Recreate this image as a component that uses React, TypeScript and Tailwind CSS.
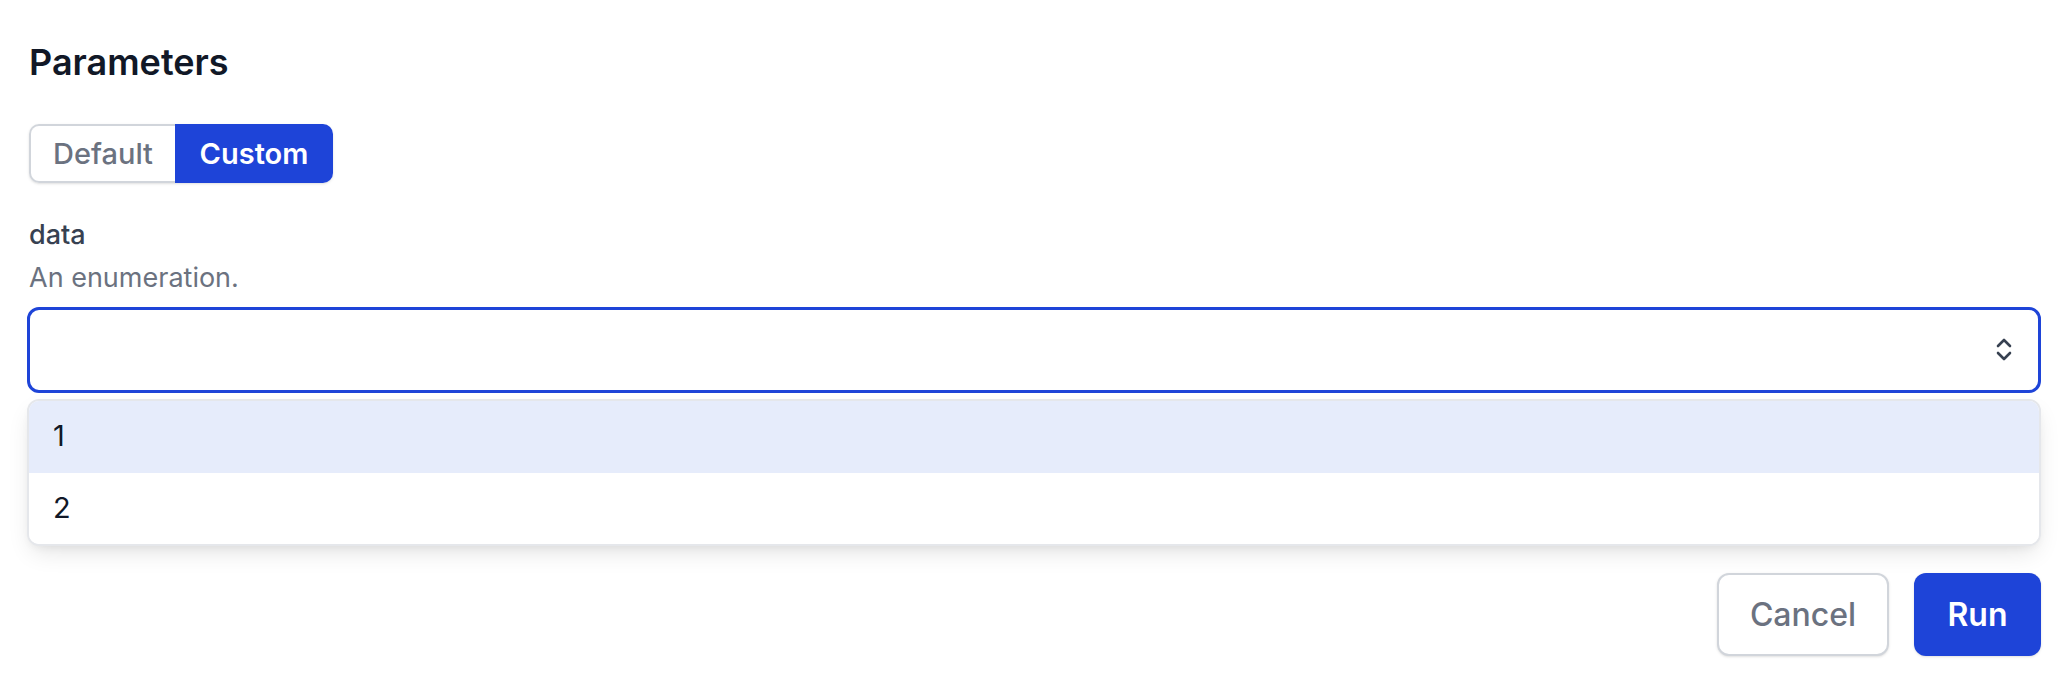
import React from "react";

export default function App() {
  return (
    <div className="w-[2072px] h-[678px] bg-white pl-[27px] pr-[31px] pt-[38px] font-['Inter',sans-serif]">
      <h2 className="text-[36px] leading-[48px] font-semibold text-[#111827] pl-[2px]">Parameters</h2>
      <div className="mt-[38px] flex h-[59px] w-fit ml-[2px] rounded-[10px] shadow-sm">
        <button className="w-[146px] h-full rounded-l-[10px] border-2 border-r-0 border-[#d1d5db] bg-white text-[29px] font-medium text-[#6b7280]">Default</button>
        <button className="w-[158px] h-full rounded-r-[10px] bg-[#1e44d8] text-[29px] font-semibold text-white">Custom</button>
      </div>
      <div className="mt-[32px] pl-[2px] text-[27px] leading-[40px] font-medium text-[#374151]">data</div>
      <div className="mt-[3px] pl-[2px] text-[27px] leading-[40px] text-[#6b7280]">An enumeration.</div>
      <div className="mt-[9px] relative">
        <div className="h-[86px] w-full rounded-[12px] border-[3px] border-[#1e44d8] bg-white flex items-center justify-end pr-[26px]">
          <svg width="16" height="26" viewBox="0 0 16 26" fill="none" stroke="#374151" strokeWidth="2.6" strokeLinecap="round" strokeLinejoin="round">
            <path d="M2 9 L8 3 L14 9" />
            <path d="M2 16 L8 22 L14 16" />
          </svg>
        </div>
        <div className="mt-[6px] w-full rounded-[12px] border-2 border-[#e5e7eb] bg-white shadow-[0_10px_25px_-5px_rgba(0,0,0,0.12),0_4px_10px_-4px_rgba(0,0,0,0.08)] overflow-hidden">
          <div className="h-[72px] bg-[#e6ecfb] flex items-center pl-[24px] pb-[2px] text-[29px] text-[#111827]">1</div>
          <div className="h-[71px] bg-white flex items-center pl-[24px] pb-[2px] text-[29px] text-[#111827]">2</div>
        </div>
      </div>
      <div className="mt-[27px] flex justify-end gap-[25px]">
        <button className="w-[172px] h-[83px] rounded-[12px] border-2 border-[#d1d5db] bg-white text-[32px] font-medium text-[#6b7280] shadow-sm">Cancel</button>
        <button className="w-[127px] h-[83px] rounded-[12px] bg-[#1e44d8] text-[32px] font-semibold text-white shadow-sm">Run</button>
      </div>
    </div>
  );
}
